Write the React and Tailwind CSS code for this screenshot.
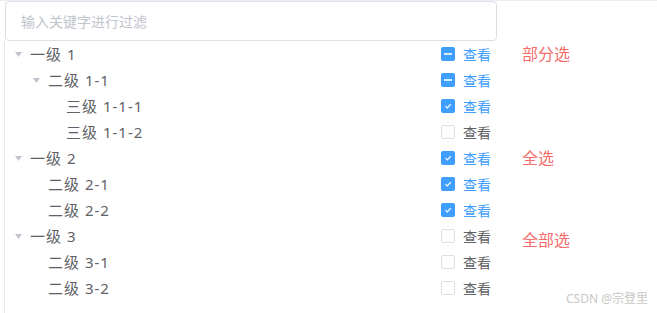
import React from 'react';

const rows = [
  { label: '一级 1', level: 1, arrow: true, state: 'half', note: '部分选' },
  { label: '二级 1-1', level: 2, arrow: true, state: 'half' },
  { label: '三级 1-1-1', level: 3, state: 'on' },
  { label: '三级 1-1-2', level: 3, state: 'off' },
  { label: '一级 2', level: 1, arrow: true, state: 'on', note: '全选' },
  { label: '二级 2-1', level: 2, state: 'on' },
  { label: '二级 2-2', level: 2, state: 'on' },
  { label: '一级 3', level: 1, arrow: true, state: 'off', note: '全部选', low: true },
  { label: '二级 3-1', level: 2, state: 'off' },
  { label: '二级 3-2', level: 2, state: 'off' },
];

const indent = ['pl-0', 'pl-[18px]', 'pl-[36px]'];

function Checkbox({ state }) {
  if (state === 'off') {
    return <span className="w-[14px] h-[14px] rounded-[2px] border border-[#dcdfe6] bg-white" />;
  }
  return (
    <span className="w-[14px] h-[14px] rounded-[2px] bg-[#409eff] flex items-center justify-center">
      {state === 'half' ? (
        <span className="w-[8px] h-[2px] bg-white/80" />
      ) : (
        <svg width="10" height="10" viewBox="0 0 10 10">
          <path d="M2.5 5.2 L4.3 7 L7.8 3.2" fill="none" stroke="white" strokeWidth="1.2" />
        </svg>
      )}
    </span>
  );
}

export default function App() {
  return (
    <div
      className="relative w-[657px] h-[313px] bg-white border-t border-[#ebeef5] overflow-hidden"
      style={{ fontFamily: '"Noto Sans", "Noto Sans CJK SC", sans-serif' }}
    >
      <div className="ml-[5px] w-[492px] h-[40px] border border-[#dcdfe6] rounded-[4px] flex items-center pl-[15px] text-[14px] text-[#c0c4cc]">
        输入关键字进行过滤
      </div>
      <div className="ml-[4px] border-l border-[#e4e7ed] h-[273px] pl-[1px]">
        {rows.map((r) => (
          <div key={r.label} className="h-[26px] flex items-center text-[14px]">
            <div className={`w-[435px] flex items-center ${indent[r.level - 1]}`}>
              <span className="w-[24px] h-[26px] flex items-center justify-center">
                {r.arrow && (
                  <svg width="7" height="5" viewBox="0 0 7 5">
                    <path d="M0 0 H7 L3.5 5 Z" fill="#c0c4cc" />
                  </svg>
                )}
              </span>
              <span className="text-[#606266] text-[15px] tracking-[1px]">{r.label}</span>
            </div>
            <Checkbox state={r.state} />
            <span
              className={`ml-[8px] w-[59px] ${
                r.state === 'off' ? 'text-[#606266]' : 'text-[#409eff]'
              }`}
            >
              查看
            </span>
            {r.note && (
              <span className={`text-[#f56c6c] text-[16px] ${r.low ? 'pt-[8px]' : ''}`}>
                {r.note}
              </span>
            )}
          </div>
        ))}
      </div>
      <div className="absolute right-[9px] bottom-[5px] text-[12px] text-[#c8c8c8]">
        CSDN @宗登里
      </div>
    </div>
  );
}
